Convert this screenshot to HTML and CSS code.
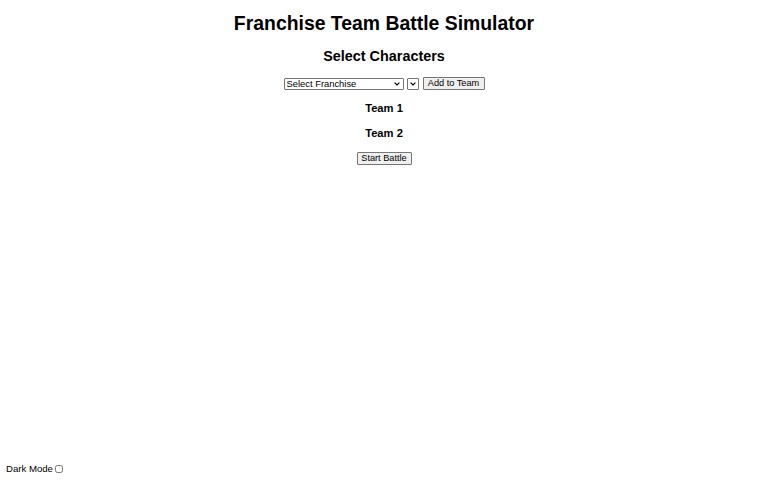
FILE: index.html
```html
<!DOCTYPE html>
<html lang="en">
<head>
<meta charset="utf-8">
<title>Franchise Team Battle Simulator</title>
<link rel="stylesheet" href="styles.css">
</head>
<body>
  <main class="app">
    <h1 class="title">Franchise Team Battle Simulator</h1>
    <section class="picker">
      <h2 class="picker-title">Select Characters</h2>
      <div class="picker-row">
        <select class="select franchise-select">
          <option>Select Franchise</option>
        </select>
        <select class="select character-select"></select>
        <button class="btn add-btn" type="button">Add to Team</button>
      </div>
    </section>
    <section class="team">
      <h3 class="team-title">Team 1</h3>
      <ul class="team-list"></ul>
    </section>
    <section class="team">
      <h3 class="team-title">Team 2</h3>
      <ul class="team-list"></ul>
    </section>
    <button class="btn battle-btn" type="button">Start Battle</button>
  </main>
  <footer class="settings">
    <label class="theme-toggle">Dark Mode <input type="checkbox" class="theme-check"></label>
  </footer>
</body>
</html>
```

FILE: styles.css
```css
html, body {
  height: 100%;
}

body {
  margin: 0;
  display: flex;
  flex-direction: column;
  background: #fff;
  color: #000;
  font-family: "Liberation Sans", Arial, sans-serif;
}

.app {
  flex: 1;
  display: flex;
  flex-direction: column;
  align-items: center;
  padding-top: 12px;
  text-align: center;
}

.title {
  margin: 0;
  font-size: 19.4px;
  line-height: 22px;
  font-weight: bold;
}

.picker {
  display: flex;
  flex-direction: column;
  align-items: center;
}

.picker-title {
  margin: 14px 0 0;
  font-size: 14.4px;
  line-height: 17px;
  font-weight: bold;
}

.picker-row {
  display: flex;
  align-items: flex-start;
  margin-top: 12px;
  height: 13px;
}

/* compact select with a small chevron on the right */
.select {
  appearance: none;
  -webkit-appearance: none;
  box-sizing: border-box;
  height: 12px;
  margin: 0;
  padding: 0 0 0 2px;
  font-family: "Liberation Sans", Arial, sans-serif;
  font-size: 9.4px;
  line-height: 10px;
  color: #000;
  border: 1px solid #767676;
  border-radius: 1px;
  background-color: #fff;
  background-image: url("data:image/svg+xml,%3Csvg xmlns='http://www.w3.org/2000/svg' width='6' height='4' viewBox='0 0 6 4'%3E%3Cpath d='M0.6 0.6 L3 3 L5.4 0.6' fill='none' stroke='%23000' stroke-width='1.2'/%3E%3C/svg%3E");
  background-repeat: no-repeat;
  background-size: 6px 4px;
}

.franchise-select {
  width: 120px;
  margin-top: 1px;
  background-position: right 3px center;
}

.character-select {
  width: 12px;
  margin: 1px 0 0 3px;
  padding: 0;
  background-position: center;
}

.btn {
  box-sizing: border-box;
  height: 13px;
  margin: 0;
  padding: 0 2px;
  font-family: "Liberation Sans", Arial, sans-serif;
  font-size: 9.2px;
  line-height: 11px;
  white-space: nowrap;
  color: #000;
  background: #efefef;
  border: 1px solid #767676;
  border-radius: 1px;
}

.add-btn {
  width: 62px;
  margin-left: 4px;
}

.team {
  display: flex;
  flex-direction: column;
  align-items: center;
}

.team-title {
  margin: 12px 0 0;
  font-size: 11.2px;
  line-height: 13px;
  font-weight: bold;
}

.team-list {
  margin: 0;
  padding: 0;
  list-style: none;
}

.battle-btn {
  width: 55px;
  margin-top: 12px;
}

.settings {
  padding: 0 6px 4px;
}

.theme-toggle {
  display: inline-flex;
  align-items: center;
  gap: 2px;
  font-size: 9.6px;
  line-height: 12px;
}

.theme-check {
  width: 8px;
  height: 8px;
  margin: 0;
}
```
